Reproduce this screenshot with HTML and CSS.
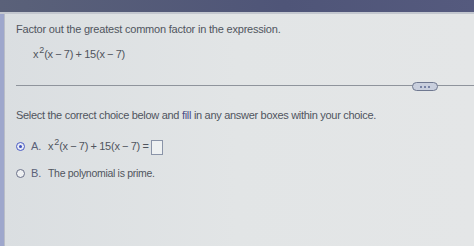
FILE: index.html
```html
<!DOCTYPE html>
<html>
<head>
<meta charset="utf-8">
<link rel="stylesheet" href="styles.css">
</head>
<body>
<div class="screen">
  <div class="topbar"></div>
  <div class="main">
    <div class="edge"></div>
    <div class="content">
      <p class="prompt">Factor out the greatest common factor in the expression.</p>
      <p class="expr"><span class="math">x<sup>2</sup>(x − 7) + 15(x − 7)</span></p>
      <div class="divider">
        <span class="more"><i></i><i></i><i></i></span>
      </div>
      <p class="prompt instr">Select the correct choice below and <span class="fill">fill</span> in any answer boxes within your choice.</p>
      <div class="choices">
        <div class="choice">
          <span class="radio on"></span>
          <span class="label">A.</span>
          <span class="math">x<sup>2</sup>(x − 7) + 15(x − 7) =</span>
          <span class="box"></span>
        </div>
        <div class="choice">
          <span class="radio"></span>
          <span class="label">B.</span>
          <span class="text">The polynomial is prime.</span>
        </div>
      </div>
    </div>
  </div>
</div>
</body>
</html>
```
FILE: styles.css
```css
html, body {
  margin: 0;
  padding: 0;
  width: 474px;
  height: 246px;
  overflow: hidden;
  background: #dfe2e4;
}
.screen {
  width: 474px;
  height: 246px;
  display: flex;
  flex-direction: column;
  font-family: "Liberation Sans", Arial, sans-serif;
  color: #50555e;
  background: linear-gradient(90deg, #dadee1 0%, #e2e5e6 50%, #e4e6e7 100%);
}
.topbar {
  height: 12px;
  flex: none;
  background: linear-gradient(90deg, #5a6179 0%, #4f5578 60%, #555a7e 100%);
  border-bottom: 2px solid #c3c7cf;
}
.main {
  flex: 1;
  display: flex;
}
.edge {
  width: 4px;
  flex: none;
  background: #9ea7cc;
  border-right: 1px solid #b9bdc7;
}
.content {
  flex: 1;
  padding: 0 0 0 11px;
}
p { margin: 0; }
.prompt {
  font-size: 11px;
  letter-spacing: -0.2px;
  padding-top: 8px;
  line-height: 14px;
}
.expr {
  padding: 11px 0 0 17px;
  font-size: 11px;
  line-height: 14px;
}
.math {
  font-size: 11px;
  letter-spacing: -0.2px;
  word-spacing: -0.5px;
}
sup {
  font-size: 9px;
  line-height: 0;
  vertical-align: 5px;
  margin-left: 1px;
}
.divider {
  margin: 24px 0 0 0;
  height: 1px;
  background: #8f949c;
  position: relative;
}
.more {
  position: absolute;
  left: 396px;
  top: -3px;
  width: 24px;
  height: 7px;
  border: 1px solid #6f7890;
  border-radius: 5px;
  background: #c9cfdd;
  display: flex;
  justify-content: center;
  align-items: center;
  gap: 2px;
}
.more i {
  width: 2px;
  height: 2px;
  background: #5d6a92;
  border-radius: 1px;
}
.instr {
  padding-top: 22px;
  letter-spacing: -0.3px;
}
.fill { color: #4a4f8a; }
.choices {
  display: flex;
  flex-direction: column;
  gap: 11px;
  padding: 16px 0 0 0;
}
.choice {
  display: flex;
  align-items: center;
  font-size: 11px;
  line-height: 15px;
}
.radio {
  width: 9px;
  height: 9px;
  border: 1px solid #6a7088;
  border-radius: 50%;
  background: #eef0f2;
  box-sizing: border-box;
  margin: 0 6px 0 0;
  flex: none;
  position: relative;
}
.radio.on {
  border: 1.5px solid #4a5bc4;
  background: #e8ebf5;
}
.radio.on::after {
  content: "";
  position: absolute;
  left: 1.5px;
  top: 1.5px;
  width: 3px;
  height: 3px;
  border-radius: 50%;
  background: #3c4fbf;
}
.label {
  width: 17px;
  color: #5a6178;
}
.box {
  width: 10px;
  height: 13px;
  border: 1px solid #8a94a8;
  background: #eef1f2;
  margin: 2px 0 0 2px;
}
.text {
  font-size: 10.5px;
  letter-spacing: -0.3px;
}
```
